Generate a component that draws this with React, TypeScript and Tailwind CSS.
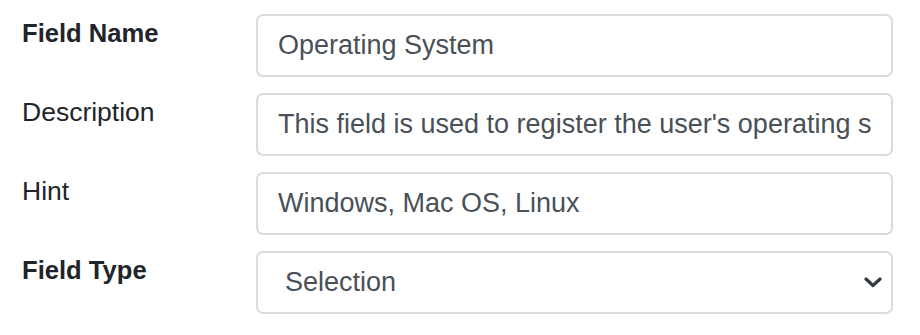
import React from "react";

const rows: { label: string; bold: boolean; value: string; select?: boolean }[] = [
  { label: "Field Name", bold: true, value: "Operating System" },
  { label: "Description", bold: false, value: "This field is used to register the user's operating system." },
  { label: "Hint", bold: false, value: "Windows, Mac OS, Linux" },
  { label: "Field Type", bold: true, value: "Selection", select: true },
];

export default function App() {
  return (
    <div
      className="w-[920px] h-[335px] bg-white overflow-hidden"
      style={{ fontFamily: '"Liberation Sans", Arial, sans-serif' }}
    >
      <div className="flex flex-col gap-[16px] pt-[14px] pl-[22px] pr-[27px]">
        {rows.map((r) => (
          <div key={r.label} className="flex items-start">
            <div
              className={
                r.bold
                  ? "w-[234px] shrink-0 -mt-[1px] h-[40px] text-[25.6px] leading-[40px] font-bold text-[#212529]"
                  : "w-[234px] shrink-0 -mt-[1px] h-[40px] text-[26.5px] leading-[40px] text-[#212529]"
              }
            >
              {r.label}
            </div>
            <div className="flex-1 min-w-0 h-[63px] border-2 border-[#d9dbdd] rounded-[7px] bg-white flex items-center">
              {r.select ? (
                <div className="flex-1 flex items-center pl-[27px] pr-[9px]">
                  <div className="flex-1 text-[27px] text-[#495057] whitespace-nowrap">{r.value}</div>
                  <svg width="18" height="11" viewBox="0 0 18 11" className="shrink-0">
                    <polyline
                      points="2,2 9,8.5 16,2"
                      fill="none"
                      stroke="#343a40"
                      strokeWidth="3.2"
                      strokeLinecap="round"
                      strokeLinejoin="round"
                    />
                  </svg>
                </div>
              ) : (
                <div className="flex-1 min-w-0 mx-[20px] overflow-hidden whitespace-nowrap text-[27px] text-[#495057]">
                  {r.value}
                </div>
              )}
            </div>
          </div>
        ))}
      </div>
    </div>
  );
}
